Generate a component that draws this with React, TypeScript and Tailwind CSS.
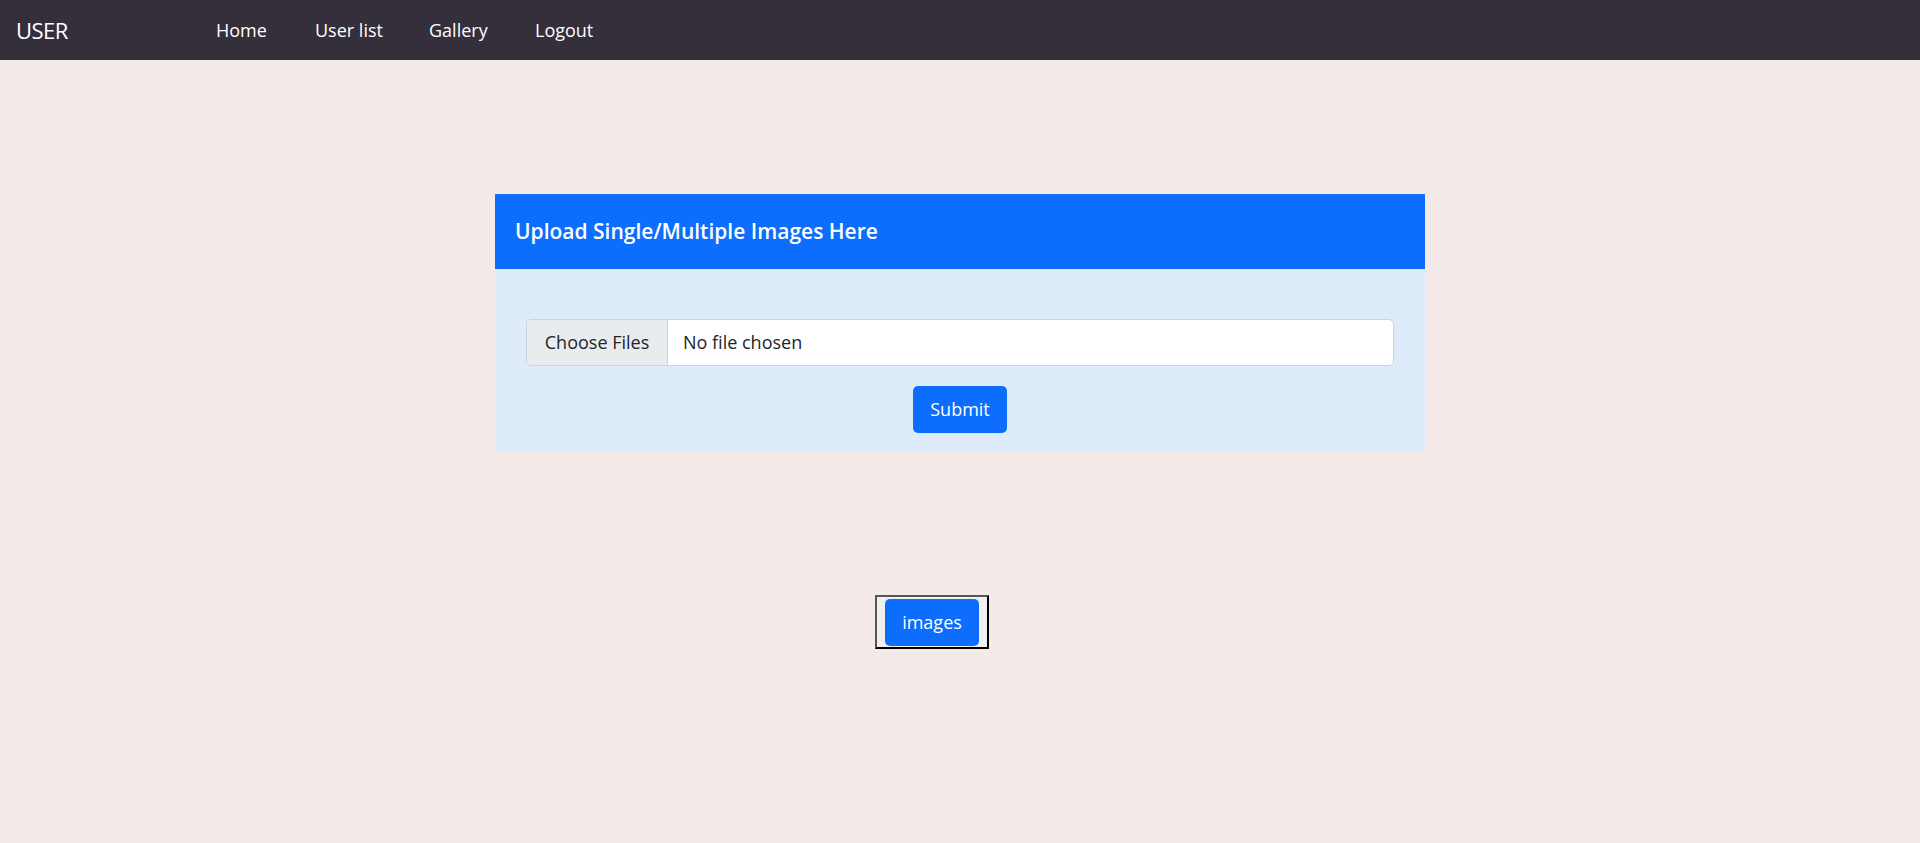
export default function App() {
  return (
    <div className="min-h-[843px] bg-[#f5eaea] font-['Open_Sans',sans-serif] text-[18px] text-[#212529]">
      <nav className="flex h-[60px] items-center bg-[#352e3b] text-white">
        <a className="ml-4 w-[200px] text-[22px] tracking-[-0.5px]">USER</a>
        <a className="w-[99px]">Home</a>
        <a className="w-[114px]">User list</a>
        <a className="w-[106px]">Gallery</a>
        <a>Logout</a>
      </nav>

      <section className="mx-auto mt-[134px] w-[930px] bg-[#deebfa]">
        <h5 className="flex h-[75px] items-center bg-[#0d6efd] px-[20px] text-[21px] font-semibold text-white">
          Upload Single/Multiple Images Here
        </h5>
        <form className="flex h-[183px] flex-col items-center px-[31px] pt-[50px]">
          <div className="flex h-[47px] w-full overflow-hidden rounded-[5px] border border-[#ced4da] bg-white">
            <span className="flex w-[141px] items-center justify-center border-r border-[#ced4da] bg-[#e9ecef]">
              Choose Files
            </span>
            <span className="flex items-center pl-[15px]">No file chosen</span>
          </div>
          <button className="mt-[20px] h-[47px] w-[94px] rounded-[5px] bg-[#0d6efd] text-white">Submit</button>
        </form>
      </section>

      <button className="mt-[143px] ml-[875px] flex h-[54px] w-[114px] items-center justify-center border-2 border-t-[#555555] border-r-black border-b-black border-l-[#555555] bg-[#f0f0f0]">
        <span className="flex h-[47px] w-[94px] items-center justify-center rounded-[5px] bg-[#0d6efd] text-white">
          images
        </span>
      </button>
    </div>
  );
}
